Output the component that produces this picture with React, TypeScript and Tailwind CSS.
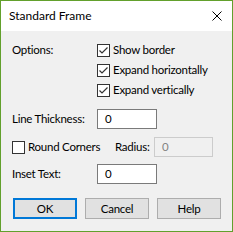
import React from "react";

const font = { fontFamily: 'Lato, "Noto Sans", sans-serif' };

const Check = ({ checked }: { checked: boolean }) => (
  <span className="w-[13px] h-[13px] border border-[#333333] bg-white flex items-center justify-center shrink-0">
    {checked && (
      <svg width="11" height="11" viewBox="0 0 11 11">
        <path d="M1.5 5.5 L4 8 L9.5 2.5" fill="none" stroke="#333333" strokeWidth="1.2" />
      </svg>
    )}
  </span>
);

const CheckRow = ({ label, checked }: { label: string; checked: boolean }) => (
  <div className="h-[20px] flex items-center gap-[3px]">
    <Check checked={checked} />
    <span>{label}</span>
  </div>
);

const TextBox = ({ value, disabled }: { value: string; disabled?: boolean }) => (
  <div
    className={
      disabled
        ? "w-[59px] h-[20px] border border-[#cccccc] bg-[#f0f0f0] text-[#838383] flex items-center pl-[7px]"
        : "w-[60px] h-[20px] border border-[#7a7a7a] bg-white flex items-center pl-[7px]"
    }
  >
    {value}
  </div>
);

const Btn = ({ label, primary }: { label: string; primary?: boolean }) => (
  <button
    className={
      primary
        ? "w-[64px] h-[21px] border-2 border-[#0078d7] bg-[#e1e1e1] flex items-center justify-center"
        : "w-[64px] h-[21px] border border-[#adadad] bg-[#e1e1e1] flex items-center justify-center"
    }
  >
    {label}
  </button>
);

export default function App() {
  return (
    <div
      className="w-[233px] h-[232px] border border-[#62a02c] bg-[#f0f0f0] flex flex-col text-[11.5px] tracking-[-0.25px] text-black leading-none"
      style={font}
    >
      <div className="h-[30px] bg-white flex items-center justify-between pl-[8px] pr-[10px]">
        <span className="text-[12px] tracking-normal">Standard Frame</span>
        <svg width="10" height="10" viewBox="0 0 10 10">
          <path d="M0.5 0.5 L9.5 9.5 M9.5 0.5 L0.5 9.5" stroke="#000" strokeWidth="1" />
        </svg>
      </div>

      <div className="flex flex-col pl-[11px] pt-[9px]">
        <div className="flex">
          <div className="w-[85px] h-[20px] flex items-center">Options:</div>
          <div className="flex flex-col">
            <CheckRow label="Show border" checked />
            <CheckRow label="Expand horizontally" checked />
            <CheckRow label="Expand vertically" checked />
          </div>
        </div>

        <div className="flex items-center mt-[9px]">
          <span className="w-[85px]">Line Thickness:</span>
          <TextBox value="0" />
        </div>

        <div className="flex items-center mt-[8px]">
          <div className="w-[103px] flex items-center gap-[3px]">
            <Check checked={false} />
            <span>Round Corners</span>
          </div>
          <span className="w-[39px]">Radius:</span>
          <TextBox value="0" disabled />
        </div>

        <div className="flex items-center mt-[7px]">
          <span className="w-[85px]">Inset Text:</span>
          <TextBox value="0" />
        </div>

        <div className="flex gap-[8px] mt-[14px] pl-[1px]">
          <Btn label="OK" primary />
          <Btn label="Cancel" />
          <Btn label="Help" />
        </div>
      </div>
    </div>
  );
}
